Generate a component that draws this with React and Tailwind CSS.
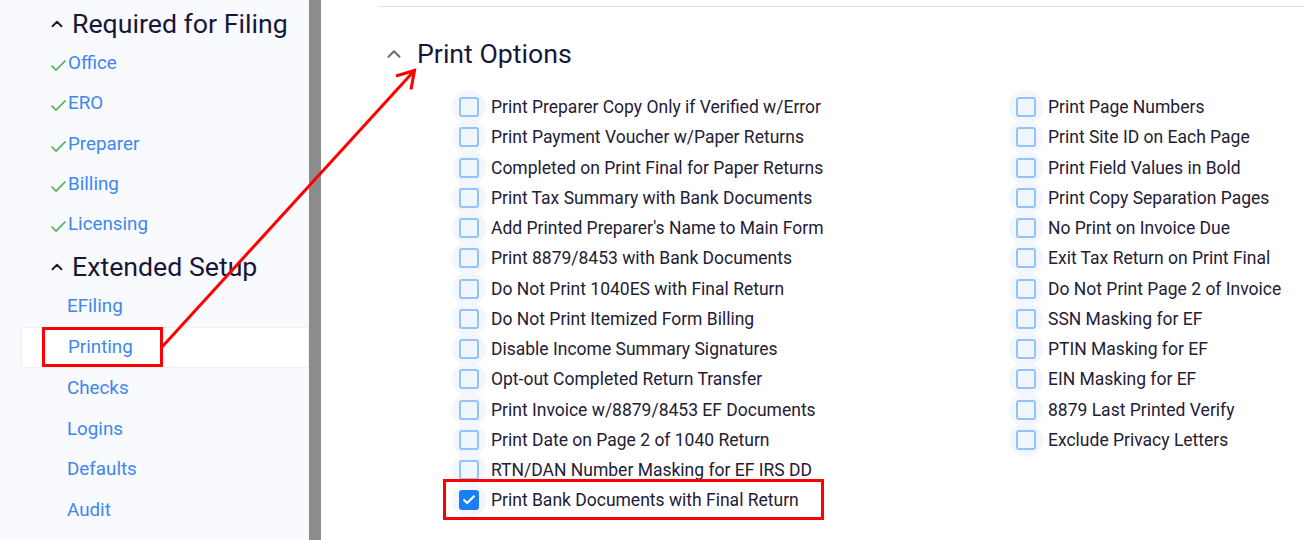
import { ChevronUp } from 'lucide-react'

const REQUIRED = ['Office', 'ERO', 'Preparer', 'Billing', 'Licensing']
const EXTENDED = ['EFiling', 'Printing', 'Checks', 'Logins', 'Defaults', 'Audit']

const LEFT_OPTIONS = [
  'Print Preparer Copy Only if Verified w/Error',
  'Print Payment Voucher w/Paper Returns',
  'Completed on Print Final for Paper Returns',
  'Print Tax Summary with Bank Documents',
  "Add Printed Preparer's Name to Main Form",
  'Print 8879/8453 with Bank Documents',
  'Do Not Print 1040ES with Final Return',
  'Do Not Print Itemized Form Billing',
  'Disable Income Summary Signatures',
  'Opt-out Completed Return Transfer',
  'Print Invoice w/8879/8453 EF Documents',
  'Print Date on Page 2 of 1040 Return',
  'RTN/DAN Number Masking for EF IRS DD',
]

const RIGHT_OPTIONS = [
  'Print Page Numbers',
  'Print Site ID on Each Page',
  'Print Field Values in Bold',
  'Print Copy Separation Pages',
  'No Print on Invoice Due',
  'Exit Tax Return on Print Final',
  'Do Not Print Page 2 of Invoice',
  'SSN Masking for EF',
  'PTIN Masking for EF',
  'EIN Masking for EF',
  '8879 Last Printed Verify',
  'Exclude Privacy Letters',
]

function GreenCheck() {
  return (
    <svg width="17" height="14" viewBox="0 0 17 14" className="shrink-0 mt-[4px]">
      <polyline points="1.5,7.5 6,12 15.5,2.5" fill="none" stroke="#4caf50" strokeWidth="1.6" />
    </svg>
  )
}

function Box({ checked }) {
  return (
    <span className="-m-[7px] w-[34px] h-[34px] rounded-full bg-[#f3f7fd] flex items-center justify-center shrink-0">
      {checked ? (
        <span className="w-[20px] h-[20px] rounded-[3px] bg-[#1a7ef6] flex items-center justify-center">
          <svg width="14" height="11" viewBox="0 0 14 11">
            <polyline points="1.5,5.5 5.2,9 12.5,1.8" fill="none" stroke="#ffffff" strokeWidth="2.2" />
          </svg>
        </span>
      ) : (
        <span className="w-[20px] h-[20px] rounded-[3px] border-2 border-[#93c3f9] bg-[#f0f6fe]" />
      )}
    </span>
  )
}

function Option({ label, checked }) {
  return (
    <div className="h-[30.25px] flex items-center gap-[12px]">
      <Box checked={checked} />
      <span className="text-[17.5px] text-[#1f2035] whitespace-nowrap">{label}</span>
    </div>
  )
}

function SectionHeading({ children }) {
  return (
    <div className="flex items-center h-[40px]">
      <ChevronUp size={18} strokeWidth={2.4} className="text-[#1b1b36] ml-[-2px]" />
      <span className="ml-[6px] text-[26.7px] text-[#17173a] leading-none">{children}</span>
    </div>
  )
}

export default function App() {
  return (
    <div className="relative w-[1304px] h-[540px] overflow-hidden flex bg-white" style={{ fontFamily: 'Roboto, "Liberation Sans", sans-serif' }}>
      <aside className="w-[309px] h-full bg-[#f8fafd] pt-[4px]">
        <div className="pl-[50px]">
          <SectionHeading>Required for Filing</SectionHeading>
        </div>
        <div className="flex flex-col -mt-[1px]">
          {REQUIRED.map(item => (
            <div key={item} className="h-[40.25px] pl-[50px] flex items-center">
              <GreenCheck />
              <span className="ml-[1px] text-[18.8px] text-[#3f86ee]">{item}</span>
            </div>
          ))}
        </div>
        <div className="pl-[50px] mt-[3px]">
          <SectionHeading>Extended Setup</SectionHeading>
        </div>
        <div className="flex flex-col -mt-[1px]">
          {EXTENDED.map(item =>
            item === 'Printing' ? (
              <div key={item} className="ml-[21px] h-[41px] bg-white border border-[#edf0f5] flex items-center">
                <span className="ml-[20px] w-[121px] h-[40px] border-[3px] border-[#ff0000] pl-[23px] flex items-center text-[18.8px] text-[#3f86ee]">
                  {item}
                </span>
              </div>
            ) : (
              <div key={item} className="h-[40.6px] pl-[67px] flex items-center text-[18.8px] text-[#3f86ee]">
                {item}
              </div>
            )
          )}
        </div>
      </aside>

      <div className="w-[12px] h-full bg-[#8c8c8c]" />

      <main className="flex-1 pl-[57px]">
        <div className="mt-[6px] border-t border-[#e2e2e2]" />
        <div className="flex items-center h-[40px] mt-[27px] pl-[5px]">
          <ChevronUp size={22} strokeWidth={2.2} className="text-[#6b6b6b]" />
          <span className="ml-[12px] text-[26.7px] text-[#17173a] leading-none">Print Options</span>
        </div>
        <div className="flex mt-[18px] pl-[81px]">
          <div className="w-[557px] flex flex-col">
            {LEFT_OPTIONS.map(o => <Option key={o} label={o} />)}
            <div className="-ml-[16px] -mt-[6px] w-[381px] h-[41px] border-[3px] border-[#ff0000] pl-[13px] flex items-center">
              <Option label="Print Bank Documents with Final Return" checked />
            </div>
          </div>
          <div className="flex flex-col">
            {RIGHT_OPTIONS.map(o => <Option key={o} label={o} />)}
          </div>
        </div>
      </main>

      <svg className="absolute inset-0 pointer-events-none" width="1304" height="540">
        <line x1="162" y1="347" x2="414" y2="71" stroke="#ff0000" strokeWidth="3" />
        <polyline points="396,76 414.5,70.5 411,89.5" fill="none" stroke="#ff0000" strokeWidth="3" />
      </svg>
    </div>
  )
}
